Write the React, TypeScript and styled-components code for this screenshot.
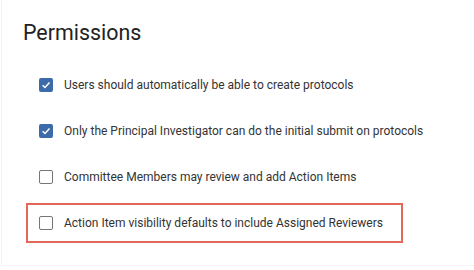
import React from "react"
import styled, { createGlobalStyle } from "styled-components"

const GlobalStyle = createGlobalStyle`
  html, body {
    margin: 0;
    padding: 0;
    background: #fff;
  }
  body {
    font-family: Roboto, "Liberation Sans", Arial, sans-serif;
  }
`

const Card = styled.section`
  width: 474px;
  height: 266px;
  box-sizing: border-box;
  border-left: 1px solid #f1f1f1;
  border-bottom: 1px solid #f6f6f6;
  margin-left: 1px;
  padding-top: 20px;
`

const Title = styled.h2`
  margin: 0 0 16px 21px;
  font-size: 21.4px;
  line-height: 26px;
  font-weight: 400;
  color: #222;
`

const List = styled.ul`
  list-style: none;
  margin: 0;
  padding: 0;
`

const Row = styled.li<{ $highlight?: boolean }>`
  display: flex;
  align-items: center;
  gap: 11px;
  box-sizing: border-box;
  font-size: 12px;
  color: #333;
  white-space: nowrap;
  height: ${p => (p.$highlight ? "40px" : "46px")};
  margin: ${p => (p.$highlight ? "3px 0 3px 24px" : "0")};
  width: ${p => (p.$highlight ? "377px" : "auto")};
  padding-left: ${p => (p.$highlight ? "11px" : "37px")};
  border: ${p => (p.$highlight ? "2px solid #e2685a" : "none")};
`

const Box = styled.span<{ $checked?: boolean }>`
  flex: none;
  width: 14px;
  height: 14px;
  box-sizing: border-box;
  border-radius: 2px;
  display: flex;
  align-items: center;
  justify-content: center;
  background: ${p => (p.$checked ? "#3d6aa9" : "#fff")};
  border: ${p => (p.$checked ? "none" : "1.5px solid #777")};
`

const Check = () => (
  <svg width="10" height="10" viewBox="0 0 10 10">
    <path d="M1.6 5.2 L4 7.5 L8.5 2.6" fill="none" stroke="#fff" strokeWidth="1.5" />
  </svg>
)

const items = [
  { label: "Users should automatically be able to create protocols", checked: true },
  { label: "Only the Principal Investigator can do the initial submit on protocols", checked: true },
  { label: "Committee Members may review and add Action Items", checked: false },
  { label: "Action Item visibility defaults to include Assigned Reviewers", checked: false, highlight: true },
]

const App = () => (
  <>
    <GlobalStyle />
    <Card>
      <Title>Permissions</Title>
      <List>
        {items.map((item, i) => (
          <Row key={i} $highlight={item.highlight}>
            <Box $checked={item.checked}>{item.checked && <Check />}</Box>
            {item.label}
          </Row>
        ))}
      </List>
    </Card>
  </>
)

export default App
